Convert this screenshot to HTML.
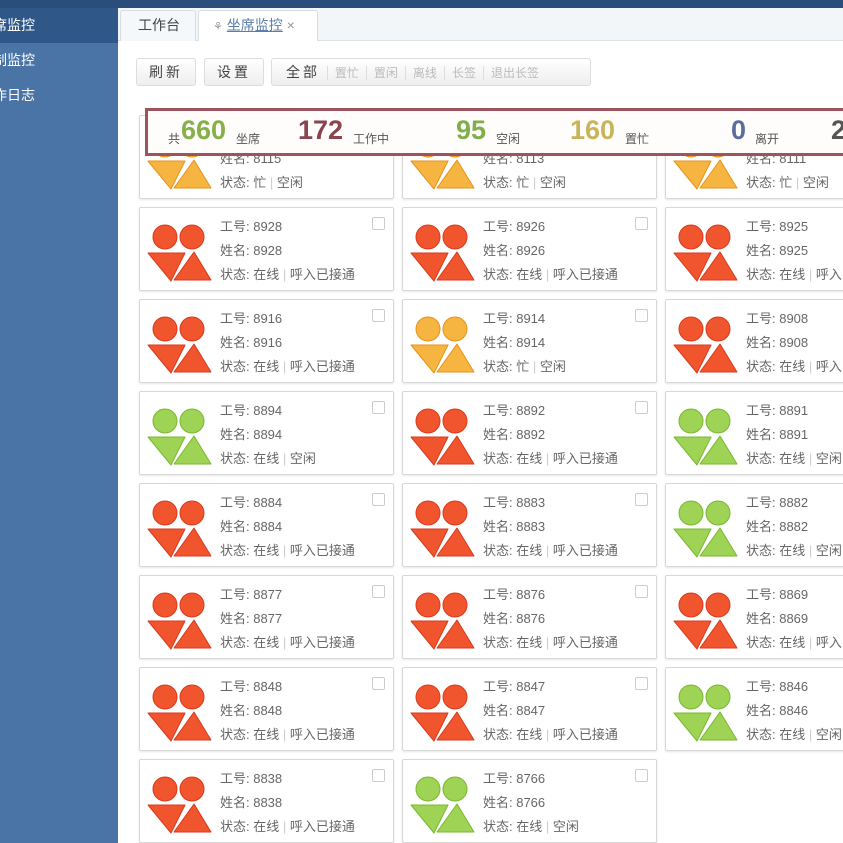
<!DOCTYPE html>
<html><head><meta charset="utf-8"><style>
*{margin:0;padding:0;box-sizing:border-box}
body{width:843px;height:843px;overflow:hidden;position:relative;background:#fff;font-family:"Liberation Sans","Noto Sans CJK SC",sans-serif}
.top{position:absolute;left:0;top:0;width:843px;height:8px;background:#2b4d7c}
.side{position:absolute;left:0;top:8px;width:118px;height:835px;background:#4a73a6}
.side div{height:35px;line-height:35px;color:#fff;font-size:14px;margin-left:-7px}
.side .sel{background:#2f5888}
.tabs{position:absolute;left:118px;top:8px;width:725px;height:33px;background:#f3f6f8;border-bottom:1px solid #dde3e8}
.tab{position:absolute;top:2px;height:31px;line-height:29px;font-size:14px;color:#444;border:1px solid #d6dde3;border-bottom:none;border-radius:3px 3px 0 0;background:#f5f8fa}
.main{position:absolute;left:118px;top:41px;width:725px;height:802px;background:#fff}
.btn{position:absolute;top:58px;height:28px;line-height:26px;font-size:14px;color:#444;border:1px solid #ddd;border-radius:3px;background:linear-gradient(#fff,#eee);text-align:center;letter-spacing:3px}
.grp span{color:#bbb;font-size:12px;letter-spacing:0;padding:0 7px;border-left:1px solid #ddd}
.stats{position:absolute;left:145px;top:108px;width:710px;height:48px;border:3px solid #9c5560;background:#fffdfb;z-index:5;font-size:12px;color:#555}
.stats b{position:absolute;top:4px;font-size:27px;font-weight:bold}
.stats i{position:absolute;top:19px;font-style:normal}
.card{position:absolute;width:255px;height:84px;border:1px solid #d8d8d8;border-radius:2px;background:#fff;box-shadow:0 1px 2px #e6e6e6}
.card svg{position:absolute;left:5px;top:12px}
.card p{position:absolute;left:80px;font-size:13px;color:#666;white-space:nowrap}
.card .cb{position:absolute;left:232px;top:9px;width:13px;height:13px;border:1px solid #ccc;border-radius:2px}
</style></head><body>
<div class="top"></div>
<div class="side"><div class="sel">席监控</div><div>制监控</div><div>作日志</div></div>
<div class="tabs">
<div class="tab" style="left:2px;width:76px;padding-left:17px">工作台</div>
<div class="tab" style="left:80px;width:120px;padding-left:14px;background:#fff;height:32px"><span style="color:#999;font-size:11px">⚘</span> <span style="color:#5a7ea8;text-decoration:underline">坐席监控</span> <span style="color:#999">×</span></div>
</div>
<div class="main"></div>
<div class="btn" style="left:136px;width:60px">刷新</div>
<div class="btn" style="left:204px;width:60px">设置</div>
<div class="btn grp" style="left:271px;width:320px;text-align:left;padding-left:14px">全部 <span>置忙</span><span>置闲</span><span>离线</span><span>长签</span><span>退出长签</span></div>
<div class="stats">
<i style="left:20px">共</i><b style="left:33px;color:#86b04a">660</b><i style="left:88px">坐席</i>
<b style="left:150px;color:#8a4450">172</b><i style="left:205px">工作中</i>
<b style="left:308px;color:#7fae4a">95</b><i style="left:348px">空闲</i>
<b style="left:422px;color:#c8b45a">160</b><i style="left:477px">置忙</i>
<b style="left:583px;color:#5a6f9c">0</b><i style="left:607px">离开</i>
<b style="left:683px;color:#555">2</b>
</div>
<div id="g"></div>
<script>
var C={r:['#f0552e','#d93a1c'],o:['#f6b540','#e8921a'],g:['#9ed356','#78b82e']};
function icon(c){var a=C[c][0],b=C[c][1];return '<svg width="70" height="64" viewBox="0 0 70 64"><circle cx="20" cy="17" r="12" fill="'+a+'" stroke="'+b+'"/><circle cx="47" cy="17" r="12" fill="'+a+'" stroke="'+b+'"/><path d="M3 33 L40 33 L26 61 Z" fill="'+a+'" stroke="'+b+'" stroke-linejoin="round"/><path d="M49 32 L66 60 L29 60 Z" fill="'+a+'" stroke="'+b+'" stroke-linejoin="round"/></svg>';}
var rows=[[['8115','o','忙','空闲'],['8113','o','忙','空闲'],['8111','o','忙','空闲']],
[['8928','r'],['8926','r'],['8925','r']],
[['8916','r'],['8914','o','忙','空闲'],['8908','r']],
[['8894','g'],['8892','r'],['8891','g']],
[['8884','r'],['8883','r'],['8882','g']],
[['8877','r'],['8876','r'],['8869','r']],
[['8848','r'],['8847','r'],['8846','g']],
[['8838','r'],['8766','g']]];
var h='',xs=[139,402,665];
rows.forEach(function(r,i){var y=115+i*92;r.forEach(function(d,j){
var s1=d[2]||'在线',s2=d[3]||(d[1]=='g'?'空闲':'呼入已接通');
h+='<div class="card" style="left:'+xs[j]+'px;top:'+y+'px">'+icon(d[1])+'<div class="cb"></div><p style="top:8px">工号: '+d[0]+'</p><p style="top:32px">姓名: '+d[0]+'</p><p style="top:56px">状态: '+s1+' <span style="color:#ccc">|</span> '+s2+'</p></div>';});});
document.getElementById('g').innerHTML=h;
</script>
</body></html>
